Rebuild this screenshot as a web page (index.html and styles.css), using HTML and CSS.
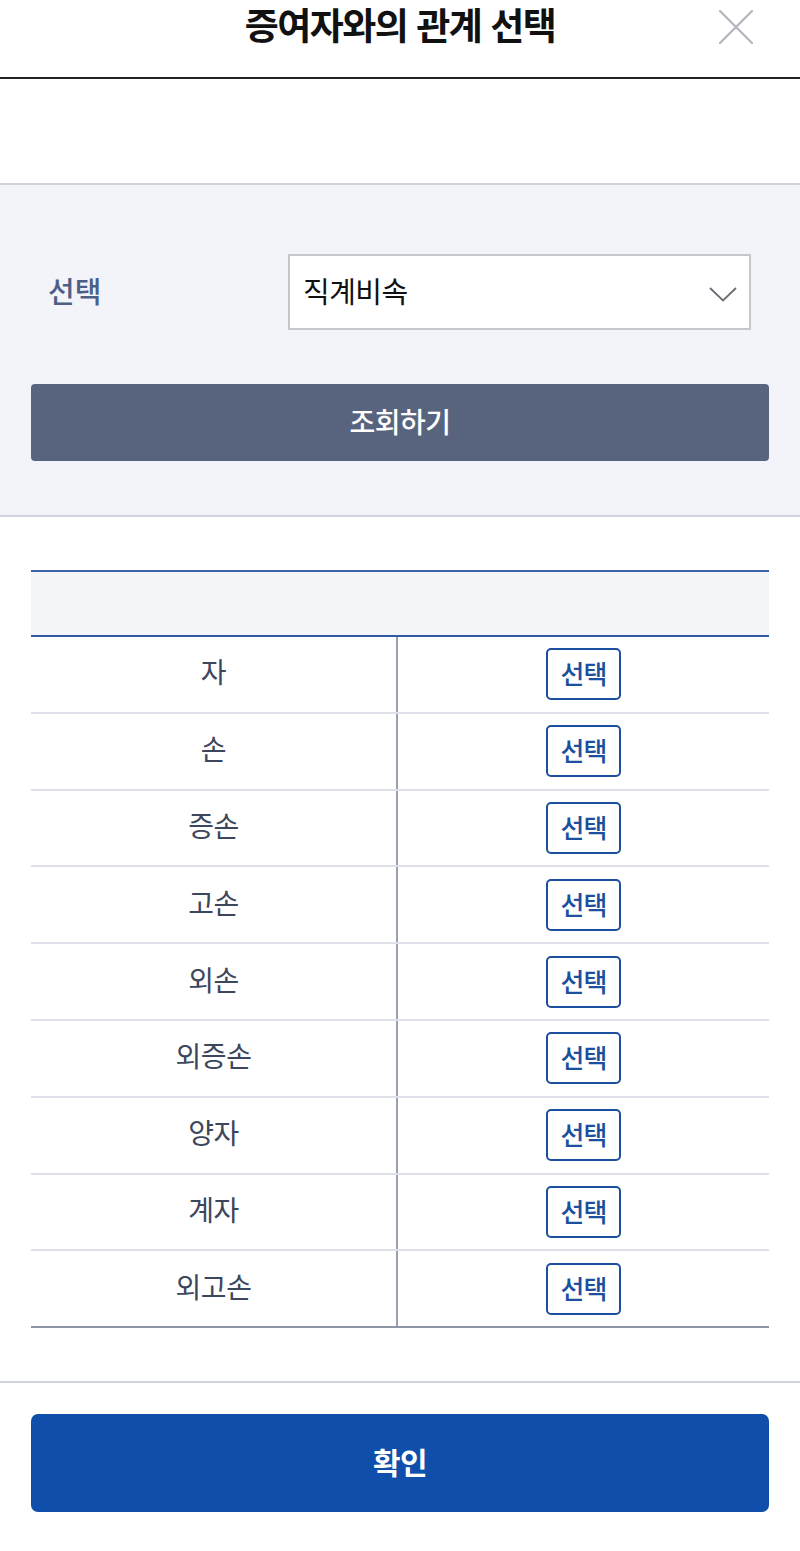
FILE: index.html
```html
<!DOCTYPE html>
<html lang="ko">
<head>
<meta charset="utf-8">
<title>증여자와의 관계 선택</title>
<link rel="stylesheet" href="styles.css">
</head>
<body>
<div class="page">
  <header class="header">
    <h1 class="title">증여자와의 관계 선택</h1>
    <button class="close" aria-label="닫기">
      <svg width="34" height="34" viewBox="0 0 34 34"><path d="M1 1 L33 33 M33 1 L1 33" stroke="#b3b5bd" stroke-width="2.2" fill="none" stroke-linecap="round"/></svg>
    </button>
  </header>

  <div class="spacer"></div>

  <section class="panel">
    <div class="field">
      <span class="field-label">선택</span>
      <div class="select">
        <span class="select-text">직계비속</span>
        <svg class="chevron" width="28" height="15" viewBox="0 0 28 15"><path d="M1 1 L14 13.5 L27 1" stroke="#6b6e75" stroke-width="1.8" fill="none"/></svg>
      </div>
    </div>
    <button class="search-btn">조회하기</button>
  </section>

  <div class="table-wrap">
    <div class="table">
      <div class="thead"></div>
      <div class="row"><div class="cell name">자</div><div class="cell act"><button class="pick">선택</button></div></div>
      <div class="row"><div class="cell name">손</div><div class="cell act"><button class="pick">선택</button></div></div>
      <div class="row"><div class="cell name">증손</div><div class="cell act"><button class="pick">선택</button></div></div>
      <div class="row"><div class="cell name">고손</div><div class="cell act"><button class="pick">선택</button></div></div>
      <div class="row"><div class="cell name">외손</div><div class="cell act"><button class="pick">선택</button></div></div>
      <div class="row"><div class="cell name">외증손</div><div class="cell act"><button class="pick">선택</button></div></div>
      <div class="row"><div class="cell name">양자</div><div class="cell act"><button class="pick">선택</button></div></div>
      <div class="row"><div class="cell name">계자</div><div class="cell act"><button class="pick">선택</button></div></div>
      <div class="row last"><div class="cell name">외고손</div><div class="cell act"><button class="pick">선택</button></div></div>
    </div>
  </div>

  <footer class="footer">
    <button class="confirm">확인</button>
  </footer>
</div>
</body>
</html>
```

FILE: styles.css
```css
* { box-sizing: border-box; }
html, body {
  margin: 0;
  padding: 0;
  background: #ffffff;
  font-family: "Noto Sans CJK KR", "Noto Sans", sans-serif;
}
.page { width: 800px; }

button {
  font-family: inherit;
  border: none;
  background: none;
  padding: 0;
  cursor: pointer;
}

.header {
  position: relative;
  height: 79px;
  border-bottom: 2px solid #222222;
}
.title {
  margin: 0;
  height: 50px;
  line-height: 48px;
  text-align: center;
  font-size: 37px;
  font-weight: 700;
  letter-spacing: -1.5px;
  color: #111111;
}
.close {
  position: absolute;
  left: 719px;
  top: 10px;
  width: 34px;
  height: 34px;
  display: flex;
}

.spacer { height: 104px; }

.panel {
  background: #f2f4f9;
  border-top: 2px solid #cfd3de;
  border-bottom: 2px solid #cfd3de;
  padding: 69px 31px 54px;
  display: flex;
  flex-direction: column;
  gap: 54px;
}
.field {
  display: grid;
  grid-template-columns: 257px 463px;
  align-items: center;
  height: 76px;
}
.field-label {
  padding-left: 17px;
  padding-bottom: 4px;
  font-size: 29px;
  font-weight: 500;
  color: #4d5f86;
  line-height: 1;
}
.select {
  height: 76px;
  background: #ffffff;
  border: 2px solid #c6c7cb;
  display: flex;
  align-items: center;
  justify-content: space-between;
  padding: 0 12px 0 13px;
}
.select-text {
  font-size: 29px;
  color: #111111;
  line-height: 1;
  letter-spacing: -0.5px;
  padding-bottom: 4px;
}
.chevron { margin-top: 4px; }

.search-btn {
  height: 77px;
  width: 100%;
  background: #58647d;
  border-radius: 4px;
  color: #ffffff;
  font-size: 28px;
  font-weight: 500;
  letter-spacing: -0.5px;
  padding-bottom: 4px;
}

.table-wrap {
  padding: 53px 31px 53px;
  border-bottom: 2px solid #cfd3de;
}
.table {
  border-top: 2px solid #3a64a6;
}
.thead {
  height: 65px;
  background: #f3f5f9;
  border-bottom: 2px solid #2f5ba2;
}
.row {
  display: grid;
  grid-template-columns: 367px 1fr;
  height: 76.8px;
  border-bottom: 2px solid #dde0e8;
}
.row.last { border-bottom-color: #8e95a5; }
.cell {
  display: flex;
  align-items: center;
  justify-content: center;
}
.name {
  font-size: 28px;
  color: #3c465c;
  letter-spacing: -0.5px;
  padding-bottom: 6px;
  border-right: 2px solid #9aa0ae;
}
.pick {
  width: 75px;
  height: 52px;
  border: 2px solid #1c4f9e;
  border-radius: 5px;
  background: #ffffff;
  color: #1c4f9e;
  font-size: 26px;
  font-weight: 500;
  letter-spacing: -1px;
  line-height: 1;
  padding-bottom: 2px;
}

.footer {
  padding: 31px 31px 38px;
}
.confirm {
  width: 100%;
  height: 98px;
  background: #0f4fab;
  border-radius: 7px;
  color: #ffffff;
  font-size: 30px;
  font-weight: 700;
  letter-spacing: -0.5px;
  padding-bottom: 4px;
}
```
